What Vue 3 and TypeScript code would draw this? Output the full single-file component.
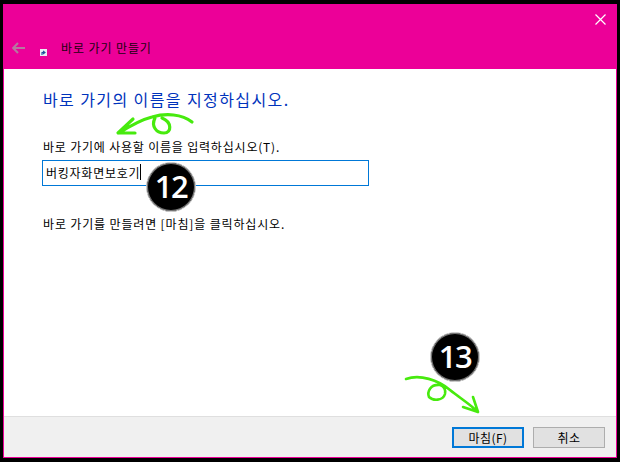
<script setup lang="ts">
const title = '바로 가기 만들기'
</script>

<template>
  <div class="frame">
    <div class="window">
      <header class="head">
        <div class="close-row">
          <svg class="close" width="11" height="11" viewBox="0 0 11 11"><path d="M.5.5l10 10M10.5.5l-10 10" stroke="#fff" stroke-width="1.2" fill="none"/></svg>
        </div>
        <div class="title-row">
          <svg class="back" width="13" height="12" viewBox="0 0 13 12"><path d="M6 1L1.2 6 6 11M1.2 6H13" stroke="#b5799f" stroke-width="2" fill="none"/></svg>
          <svg class="shortcut" width="7" height="7" viewBox="0 0 7 7"><rect width="7" height="7" fill="#e8eef5"/><path d="M2 6V3.5h2.5M3 2l2 1.5L3 5" stroke="#1c4f9c" stroke-width="1.1" fill="none"/></svg>
          <span class="title">{{ title }}</span>
        </div>
      </header>
      <main class="body">
        <h1 class="heading">바로 가기의 이름을 지정하십시오.</h1>
        <label class="label">바로 가기에 사용할 이름을 입력하십시오(T).</label>
        <div class="input"><span>버킹자화면보호기</span><i class="caret"></i></div>
        <p class="hint">바로 가기를 만들려면 [마침]을 클릭하십시오.</p>
        <svg class="arrow-a" width="90" height="32" viewBox="0 0 90 32">
          <path d="M82 14C72 6 56 5 42 9 30 12 20 18 9 25M23 11L8 25 25 25M45 10C41 18 46 25 54 25 62 25 62 14 52 10" fill="none" stroke="#47ea0e" stroke-width="3.2" stroke-linecap="round" stroke-linejoin="round"/>
        </svg>
        <svg class="arrow-b" width="84" height="44" viewBox="0 0 84 44">
          <path d="M6 7C20 2 38 8 50 18 60 26 70 32 78 40M73 25L78 40 63 35M40 13C30 12 27 20 29 25 33 29 43 29 45 22 46 18 44 14 40 13" fill="none" stroke="#47ea0e" stroke-width="2.6" stroke-linecap="round" stroke-linejoin="round"/>
        </svg>
        <div class="badge badge-a">12</div>
        <div class="badge badge-b">13</div>
      </main>
      <footer class="foot">
        <button class="btn primary">마침(F)</button>
        <button class="btn">취소</button>
      </footer>
    </div>
  </div>
</template>

<style>
html, body { margin: 0; background: #000; }
</style>

<style scoped>
.frame { width: 620px; height: 462px; box-sizing: border-box; padding: 4px 3px 4px 3px; background: #000; font-family: "Noto Sans CJK KR", "Liberation Sans", sans-serif; }
.window { height: 100%; box-sizing: border-box; display: flex; flex-direction: column; border: 1px solid #ec0098; border-top: 0; background: #fff; }
.head { height: 65px; flex: none; background: #ec0098; display: flex; flex-direction: column; margin: 0 -1px; }
.close-row { height: 30px; display: flex; justify-content: flex-end; align-items: flex-start; padding: 10px 11px 0 0; box-sizing: border-box; }
.title-row { display: flex; align-items: center; height: 28px; }
.back { margin-left: 9px; }
.shortcut { margin: 8px 0 0 15px; }
.title { margin-left: 14px; font-size: 12px; color: #1a0010; line-height: 16px; letter-spacing: .9px; }
.body { position: relative; flex: 1; padding: 20px 0 0 39px; color: #000; }
.heading { margin: 0; font-size: 16px; font-weight: 400; color: #0033bc; line-height: 20px; letter-spacing: 1.4px; }
.label { display: block; margin-top: 30px; font-size: 12px; line-height: 16px; letter-spacing: .8px; }
.input { box-sizing: border-box; width: 327px; height: 26px; margin: 5px 0 0 -1px; border: 1px solid #0078d7; display: flex; align-items: center; padding: 0 3px 2px; font-size: 12px; letter-spacing: .75px; }
.caret { width: 1px; height: 16px; background: #000; margin-left: 0; }
.hint { margin: 30px 0 0; font-size: 12px; line-height: 16px; letter-spacing: .85px; }
.arrow-a { position: absolute; left: 106px; top: 39px; }
.arrow-b { position: absolute; left: 396px; top: 303px; }
.badge { position: absolute; width: 50px; height: 50px; box-sizing: border-box; border-radius: 50%; background: #000; border: 1px solid #d0d0d0; box-shadow: inset 0 0 0 1px #777; color: #fff; font: 600 31px/46px "Open Sans", "Liberation Sans", sans-serif; letter-spacing: -1.5px; text-align: center; }
.badge-a { left: 142px; top: 93px; }
.badge-b { left: 426px; top: 263px; }
.foot { height: 41px; flex: none; background: #f0f0f0; border-top: 1px solid #dfdfdf; box-sizing: border-box; display: flex; justify-content: flex-end; align-items: center; gap: 9px; padding: 0 11px 0 0; }
.btn { width: 72px; height: 21px; box-sizing: border-box; border: 1px solid #adadad; background: #e1e1e1; font: 12px "Noto Sans CJK KR", sans-serif; color: #000; padding: 0; letter-spacing: .4px; }
.primary { border: 2px solid #0078d7; }
</style>
